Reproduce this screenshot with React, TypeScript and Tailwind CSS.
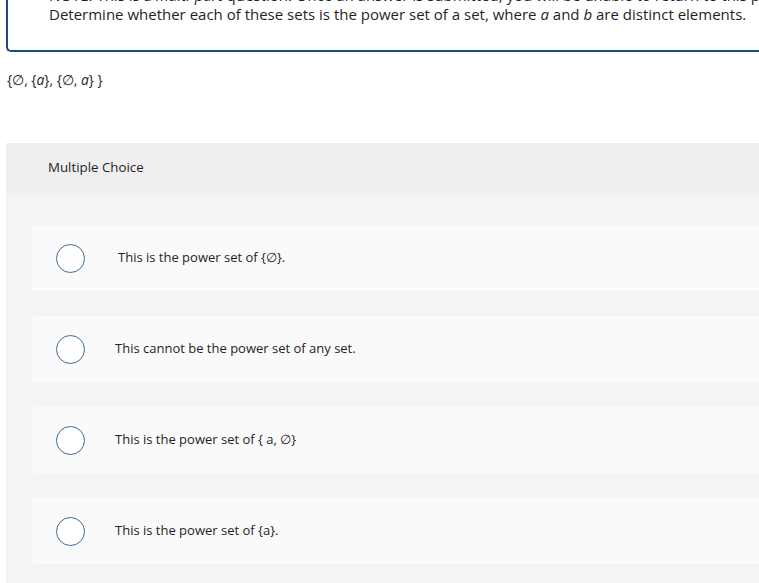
const options = [
  { text: 'This is the power set of {∅}.', pad: 'pl-[33px]' },
  { text: 'This cannot be the power set of any set.', pad: 'pl-[30px]' },
  { text: 'This is the power set of { a, ∅}', pad: 'pl-[30px]' },
  { text: 'This is the power set of {a}.', pad: 'pl-[30px]' },
]

function Radio() {
  return <span className="block h-[29px] w-[29px] shrink-0 rounded-full border-[1.5px] border-[#3d6a94] bg-white" />
}

export default function App() {
  return (
    <div className="h-[583px] w-[759px] overflow-hidden bg-white font-['Open_Sans',sans-serif] text-[#1f1f1f]">
      <div className="ml-[6px] mt-[-23px] h-[75px] w-[800px] rounded-bl-[5px] border-b-2 border-l-2 border-[#1d4b7b] pl-[41px] pt-[9px] text-[15px] leading-[19px]">
        <p className="whitespace-nowrap">
          NOTE: This is a <i>multi-part</i> question. Once an answer is submitted, you will be unable to return to this part.
        </p>
        <p className="whitespace-nowrap">
          Determine whether each of these sets is the power set of a set, where <i>a</i> and <i>b</i> are distinct elements.
        </p>
      </div>

      <p className="ml-[7px] mt-[18px] text-[13.8px] leading-[20px]">
        {'{∅, {'}<i>a</i>{'}, {∅, '}<i>a</i>{'} }'}
      </p>

      <div className="ml-[6px] mt-[53px] bg-[#f4f4f4] pb-[20px]">
        <div className="flex h-[50px] items-center bg-[#efefef] pl-[42px] text-[13.3px]">Multiple Choice</div>
        <div className="flex flex-col gap-[25px] pl-[26px] pt-[32px]">
          {options.map((o) => (
            <div key={o.text} className="flex h-[66px] items-center rounded-l-[3px] bg-[#fafafa] pl-[24px]">
              <Radio />
              <span className={`${o.pad} text-[13px]`}>{o.text}</span>
            </div>
          ))}
        </div>
      </div>
    </div>
  )
}
